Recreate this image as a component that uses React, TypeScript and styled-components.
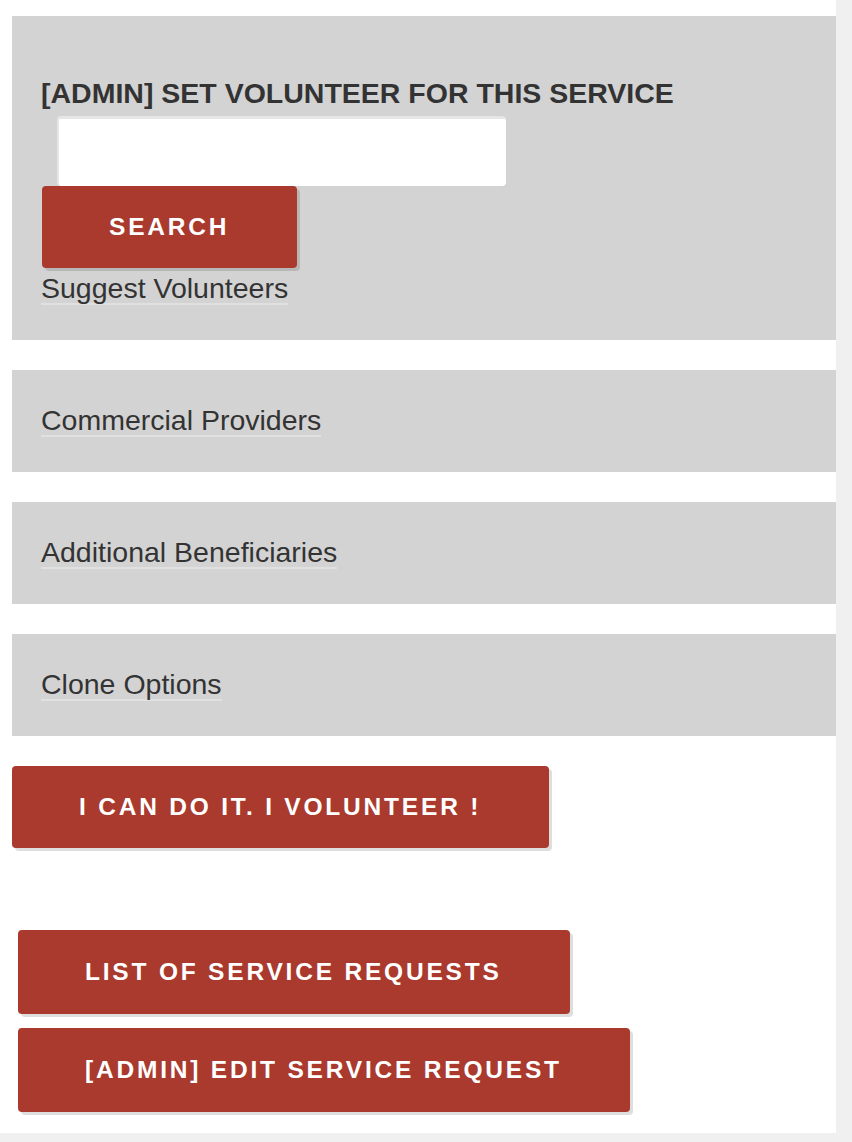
import React from "react";
import styled, { createGlobalStyle } from "styled-components";

const GlobalStyle = createGlobalStyle`
  html, body {
    margin: 0;
    padding: 0;
    background: #f0f0f0;
  }
  body {
    font-family: "Liberation Sans", Arial, sans-serif;
    color: #333;
  }
`;

const Page = styled.div`
  width: 836px;
  background: #fff;
  padding: 16px 0 21px;
  box-sizing: border-box;
`;

const Panel = styled.section<{ $tall?: boolean }>`
  margin-left: 12px;
  background: #d3d3d3;
  box-sizing: border-box;
  padding: ${(p) => (p.$tall ? "58px 29px 0" : "0 29px")};
  height: ${(p) => (p.$tall ? "324px" : "102px")};
  display: flex;
  flex-direction: column;
  justify-content: ${(p) => (p.$tall ? "flex-start" : "center")};
  align-items: flex-start;

  & + & {
    margin-top: 30px;
  }
`;

const Title = styled.h3`
  margin: 0;
  font-size: 28.5px;
  line-height: 38px;
  font-weight: bold;
  color: #333;
  text-transform: uppercase;
  white-space: nowrap;
`;

const SearchInput = styled.input`
  margin: 4px 0 0 16px;
  width: 449px;
  height: 70px;
  box-sizing: border-box;
  border: none;
  border-top: 3px solid #e6e6e6;
  border-left: 2px solid #e6e6e6;
  border-radius: 4px;
  background: #fff;
  outline: none;
`;

const Button = styled.button<{ $indent?: number; $height?: number }>`
  display: inline-flex;
  align-items: center;
  justify-content: center;
  height: ${(p) => p.$height ?? 82}px;
  padding: 0 68px 0 67px;
  margin-left: ${(p) => p.$indent ?? 0}px;
  background: #a93a2d;
  color: #fff;
  border: none;
  border-radius: 4px;
  box-shadow: 3px 3px 0 rgba(0, 0, 0, 0.13);
  font-family: "Liberation Sans", Arial, sans-serif;
  font-weight: bold;
  font-size: 24.5px;
  letter-spacing: 2.8px;
  text-transform: uppercase;
  white-space: nowrap;
  cursor: pointer;
`;

const PanelLink = styled.a<{ $top?: number }>`
  display: inline-block;
  margin-top: ${(p) => p.$top ?? 0}px;
  font-size: 28.5px;
  line-height: 30px;
  color: #333;
  text-decoration: none;
  border-bottom: 2px solid #e0e0e0;
`;

const Actions = styled.div<{ $top: number; $gap?: number }>`
  display: flex;
  flex-direction: column;
  align-items: flex-start;
  gap: ${(p) => p.$gap ?? 0}px;
  margin-top: ${(p) => p.$top}px;
`;

const sections = ["Commercial Providers", "Additional Beneficiaries", "Clone Options"];

export default function App() {
  return (
    <>
      <GlobalStyle />
      <Page>
        <Panel $tall>
          <Title>[Admin] Set volunteer for this service</Title>
          <SearchInput type="text" />
          <Button $indent={1}>Search</Button>
          <PanelLink href="#" $top={5}>
            Suggest Volunteers
          </PanelLink>
        </Panel>
        {sections.map((s) => (
          <Panel key={s}>
            <PanelLink href="#">{s}</PanelLink>
          </Panel>
        ))}
        <Actions $top={30}>
          <Button $indent={12}>I can do it. I volunteer !</Button>
        </Actions>
        <Actions $top={82} $gap={14}>
          <Button $indent={18} $height={84}>
            List of service requests
          </Button>
          <Button $indent={18} $height={84}>
            [Admin] Edit service request
          </Button>
        </Actions>
      </Page>
    </>
  );
}
